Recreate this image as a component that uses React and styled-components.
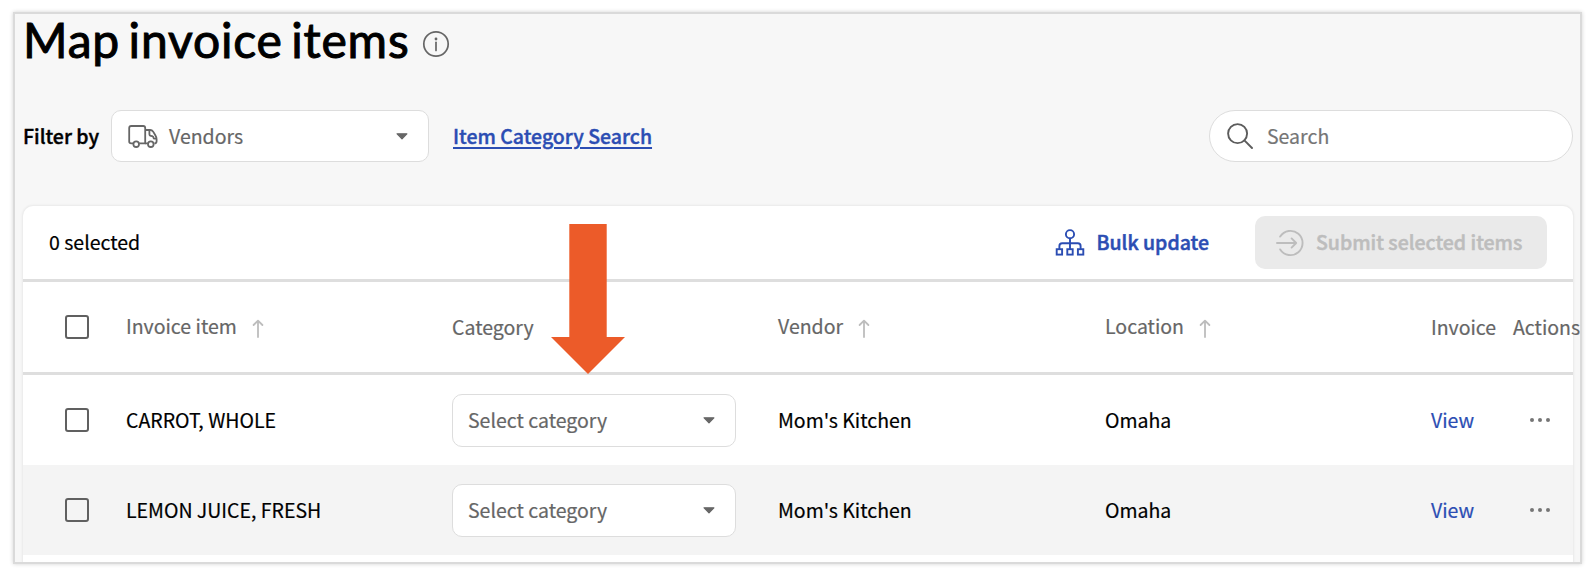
import { useState } from "react";
import styled, { createGlobalStyle } from "styled-components";

const rows = [
	{ id: 1, item: "CARROT, WHOLE", vendor: "Mom's Kitchen", location: "Omaha" },
	{ id: 2, item: "LEMON JUICE, FRESH", vendor: "Mom's Kitchen", location: "Omaha" },
];

export default function App() {
	const [search, setSearch] = useState("");
	const [selected, setSelected] = useState([]);

	function toggle(id) {
		setSelected(
			selected.includes(id)
				? selected.filter((elem) => elem !== id)
				: [...selected, id]
		);
	}

	function toggleAll() {
		setSelected(selected.length === rows.length ? [] : rows.map((row) => row.id));
	}

	return (
		<>
			<GlobalStyle />
			<Frame>
				<TitleRow>
					<Title>Map invoice items</Title>
					<InfoIcon />
				</TitleRow>

				<Filters>
					<FilterLabel>Filter by</FilterLabel>
					<VendorSelect>
						<TruckIcon />
						<SelectText>Vendors</SelectText>
						<Caret />
					</VendorSelect>
					<SearchLink href="#">Item Category Search</SearchLink>
					<SearchBox>
						<SearchIcon />
						<SearchInput
							placeholder="Search"
							value={search}
							onChange={(e) => setSearch(e.target.value)}
						/>
					</SearchBox>
				</Filters>

				<Card>
					<Toolbar>
						<Selected>{selected.length} selected</Selected>
						<BulkButton>
							<TreeIcon />
							<ButtonText>Bulk update</ButtonText>
						</BulkButton>
						<SubmitButton disabled={!selected.length}>
							<SubmitIcon />
							<ButtonText>Submit selected items</ButtonText>
						</SubmitButton>
					</Toolbar>

					<HeaderRow>
						<Check
							type="checkbox"
							checked={selected.length === rows.length}
							onChange={toggleAll}
						/>
						<SortHeading>
							Invoice item <SortIcon />
						</SortHeading>
						<Heading>Category</Heading>
						<SortHeading>
							Vendor <SortIcon />
						</SortHeading>
						<SortHeading>
							Location <SortIcon />
						</SortHeading>
						<Heading>Invoice</Heading>
						<Heading>Actions</Heading>
					</HeaderRow>

					{rows.map((row, index) => (
						<Row key={row.id} $striped={index % 2 === 1}>
							<Check
								type="checkbox"
								checked={selected.includes(row.id)}
								onChange={() => toggle(row.id)}
							/>
							<Cell>{row.item}</Cell>
							<CategorySelect>
								<SelectText>Select category</SelectText>
								<Caret />
							</CategorySelect>
							<Cell>{row.vendor}</Cell>
							<Cell>{row.location}</Cell>
							<ViewLink href="#">View</ViewLink>
							<MoreButton>
								<Dot />
								<Dot />
								<Dot />
							</MoreButton>
						</Row>
					))}
				</Card>
			</Frame>
			<Pointer width="74" height="150" viewBox="0 0 74 150">
				<path d="M18.3 0H55.7V113H74L37 150L0 113H18.3Z" fill="#ec5b29" />
			</Pointer>
		</>
	);
}

function InfoIcon() {
	return (
		<svg width="28" height="28" viewBox="0 0 28 28" fill="none" stroke="#666" strokeWidth="1.7">
			<circle cx="14" cy="14" r="12.2" />
			<path d="M14 12.3V20.4" strokeLinecap="round" />
			<circle cx="14" cy="9" r="1.4" fill="#666" stroke="none" />
		</svg>
	);
}

function TruckIcon() {
	return (
		<svg width="30" height="24" viewBox="0 0 30 24" fill="none" stroke="#666" strokeWidth="1.8" strokeLinejoin="round">
			<path d="M5.2 19.4H3.2Q1.2 19.4 1.2 17.4V4Q1.2 2 3.2 2H15.2Q17.2 2 17.2 4V19.4H11.2" />
			<path d="M17.2 6H22.2Q24 6 25 7.4L27.2 11Q28.6 13.3 28.6 15.2V17.2Q28.6 19.4 26.4 19.4M17.2 19.4H19.8" />
			<path d="M21.4 6.2V10.2Q21.4 11.6 22.8 11.9L24.2 12.2Q25.5 12.6 25.5 13.8Q25.6 14.6 26.6 14.6H28.4" />
			<circle cx="8.2" cy="20.2" r="2.8" />
			<circle cx="22.8" cy="20.2" r="2.8" />
		</svg>
	);
}

function SearchIcon() {
	return (
		<svg width="26" height="26" viewBox="0 0 26 26" fill="none" stroke="#5c5c5c" strokeWidth="1.9" strokeLinecap="round">
			<circle cx="10.6" cy="10.6" r="9.5" />
			<path d="M17.4 17.4L25 25" />
		</svg>
	);
}

function TreeIcon() {
	return (
		<svg width="30" height="27" viewBox="0 0 30 27" fill="none" stroke="#2b4db3" strokeWidth="1.9">
			<circle cx="15" cy="5.2" r="4.1" />
			<path d="M15 9.3V20M4.4 20V17Q4.4 14.2 7.2 14.2H22.8Q25.6 14.2 25.6 17V20" />
			<rect x="1.7" y="20.2" width="5.4" height="5.4" />
			<rect x="12.3" y="20.2" width="5.4" height="5.4" />
			<rect x="22.9" y="20.2" width="5.4" height="5.4" />
		</svg>
	);
}

function SubmitIcon() {
	return (
		<svg width="28" height="28" viewBox="0 0 28 28" fill="none" stroke="#bdbdbd" strokeWidth="1.9" strokeLinecap="round" strokeLinejoin="round">
			<path d="M4.2 7.6A12.1 12.1 0 1 1 4.2 20.4" />
			<path d="M1 14H20.2M15.6 9.4L20.2 14L15.6 18.6" />
		</svg>
	);
}

function SortIcon() {
	return (
		<svg width="12" height="19" viewBox="0 0 12 19" fill="none" stroke="#bdbdbd" strokeWidth="1.8" strokeLinecap="round" strokeLinejoin="round">
			<path d="M6 18V1.6M1.6 6L6 1.6L10.4 6" />
		</svg>
	);
}

function Caret() {
	return (
		<svg width="12" height="7" viewBox="0 0 12 7">
			<path d="M1.1 0.8H10.9L6 5.8Z" fill="#666" stroke="#666" strokeWidth="1.2" strokeLinejoin="round" />
		</svg>
	);
}

const GlobalStyle = createGlobalStyle`
	* {
		box-sizing: border-box;
	}

	body {
		margin: 0;
		padding: 14px 12px 14px 15px;
		background: #ffffff;
		color: #000000;
		font-family: "Noto Sans CJK SC", "Noto Sans", sans-serif;
		font-size: 19.5px;
		line-height: 28px;
		-webkit-text-stroke: 0.2px;
	}

	svg {
		flex-shrink: 0;
	}

	button, input {
		font: inherit;
	}
`;

const Frame = styled.div`
	display: flex;
	flex-direction: column;
	width: 1565px;
	height: 548px;
	padding: 0 7px 0 8px;
	overflow: hidden;
	background: #f7f7f7;
	box-shadow: 0 0 0 2px #dadada, 0 0 4px 2px #d2d2d2;
`;

const TitleRow = styled.div`
	display: flex;
	align-items: center;
	gap: 12px;
	height: 60px;
`;

const Title = styled.h1`
	width: 387px;
	margin: 0;
	padding-bottom: 8px;
	font-family: Lato, sans-serif;
	font-weight: 400;
	font-size: 48px;
	line-height: 52px;
	letter-spacing: 0.8px;
	word-spacing: -4.5px;
	white-space: nowrap;
	-webkit-text-stroke: 1px #000000;
`;

const Filters = styled.div`
	display: flex;
	align-items: center;
	height: 52px;
	margin-top: 36px;
`;

const FilterLabel = styled.span`
	width: 88px;
	font-weight: 500;
	white-space: nowrap;
	-webkit-text-stroke: 0.4px;
`;

const Select = styled.div`
	display: flex;
	align-items: center;
	height: 53px;
	border: 1px solid #dddddd;
	border-radius: 10px;
	background: #ffffff;
	color: #666666;
`;

const VendorSelect = styled(Select)`
	gap: 11px;
	width: 318px;
	height: 52px;
	padding: 0 20px 0 16px;
`;

const CategorySelect = styled(Select)`
	width: 284px;
	padding: 0 20px 0 15px;
`;

const SelectText = styled.span`
	flex: 1;
`;

const SearchLink = styled.a`
	margin-left: 24px;
	color: #2b4db3;
	font-weight: 500;
	text-decoration-thickness: 2px;
	text-underline-offset: 3px;
	-webkit-text-stroke: 0.4px;
`;

const SearchBox = styled.div`
	display: flex;
	align-items: center;
	gap: 14px;
	width: 364px;
	height: 52px;
	margin-left: auto;
	padding: 0 17px;
	border: 1px solid #dddddd;
	border-radius: 27px;
	background: #ffffff;
`;

const SearchInput = styled.input`
	flex: 1;
	min-width: 0;
	padding: 0;
	border: none;
	outline: none;
	background: none;

	&::placeholder {
		color: #757575;
		opacity: 1;
	}
`;

const Card = styled.div`
	flex: 1;
	width: 1550px;
	margin-top: 44px;
	border-radius: 10px 10px 0 0;
	background: #ffffff;
	box-shadow: 0 0 2px 1px #e9e9e9;
`;

const Toolbar = styled.div`
	display: flex;
	align-items: center;
	height: 76px;
	padding: 0 26px;
	border-bottom: 3px solid #dedede;
`;

const Selected = styled.span`
	flex: 1;
	padding-bottom: 2px;
`;

const BulkButton = styled.button`
	display: flex;
	align-items: center;
	gap: 12px;
	padding: 0;
	margin-right: 46px;
	border: none;
	background: none;
	color: #2b4db3;
	font-weight: 500;
	white-space: nowrap;
`;

const SubmitButton = styled.button`
	display: flex;
	align-items: center;
	gap: 12px;
	width: 292px;
	height: 53px;
	padding: 0 0 0 21px;
	border: none;
	border-radius: 10px;
	background: #eaeaea;
	color: #bdbdbd;
	font-weight: 500;
	white-space: nowrap;
`;

const ButtonText = styled.span`
	padding-bottom: 2px;
	-webkit-text-stroke: 0.5px;
`;

const Row = styled.div`
	display: grid;
	grid-template-columns: 61px 326px 326px 327px 326px 82px 60px;
	align-items: center;
	height: 90px;
	padding-left: 42px;
	background: ${(props) => (props.$striped ? "#f4f4f4" : "#ffffff")};
`;

const HeaderRow = styled(Row)`
	height: 93px;
	border-bottom: 3px solid #dedede;
`;

const Check = styled.input`
	appearance: none;
	width: 24px;
	height: 24px;
	margin: 0;
	border: 2px solid #606060;
	border-radius: 3px;

	&:checked {
		background: #2b4db3;
	}
`;

const Cell = styled.span`
	white-space: nowrap;
`;

const Heading = styled.span`
	color: #666666;
	white-space: nowrap;
`;

const SortHeading = styled(Heading)`
	display: flex;
	align-items: center;
	gap: 15px;
	padding-bottom: 3px;

	svg {
		margin-top: 5px;
	}
`;

const ViewLink = styled.a`
	color: #2b4db3;
	text-decoration: none;
`;

const MoreButton = styled.button`
	display: flex;
	gap: 4px;
	padding: 0 0 0 17px;
	border: none;
	background: none;
`;

const Dot = styled.span`
	width: 4px;
	height: 4px;
	border-radius: 50%;
	background: #757575;
`;

const Pointer = styled.svg`
	position: absolute;
	top: 224px;
	left: 551px;
	pointer-events: none;
`;
